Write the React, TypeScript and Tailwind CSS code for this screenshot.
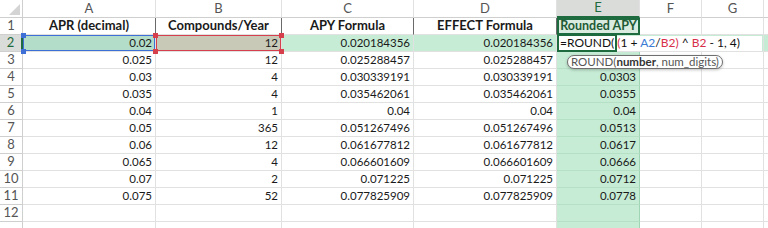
import React from 'react'

const letters = ['A', 'B', 'C', 'D', 'E', 'F', 'G', '']

const headers = ['APR (decimal)', 'Compounds/Year', 'APY Formula', 'EFFECT Formula', 'Rounded APY']

const data: string[][] = [
  ['0.02', '12', '0.020184356', '0.020184356', ''],
  ['0.025', '12', '0.025288457', '0.025288457', '0.0253'],
  ['0.03', '4', '0.030339191', '0.030339191', '0.0303'],
  ['0.035', '4', '0.035462061', '0.035462061', '0.0355'],
  ['0.04', '1', '0.04', '0.04', '0.04'],
  ['0.05', '365', '0.051267496', '0.051267496', '0.0513'],
  ['0.06', '12', '0.061677812', '0.061677812', '0.0617'],
  ['0.065', '4', '0.066601609', '0.066601609', '0.0666'],
  ['0.07', '2', '0.071225', '0.071225', '0.0712'],
  ['0.075', '52', '0.077825909', '0.077825909', '0.0778'],
  ['', '', '', '', ''],
  ['', '', '', '', ''],
]

const cell = 'border-r border-b border-[#e1e1e1] px-[3px] text-right leading-[16px] whitespace-nowrap'
const green = 'bg-[#c6ecd5]'
const rowHead = 'flex items-center justify-center border-r border-b border-[#cfcfcf] text-[13px] text-[#555]'

function Corner({ pos, color }: { pos: string; color: string }) {
  return <span className={`absolute w-[5px] h-[5px] z-20 ${pos} ${color}`} />
}

function EditCell() {
  return (
    <div className={`${cell} relative ${green} !px-0`}>
      <div className="absolute left-0 top-[1px] h-[15px] w-[205px] bg-white z-10" />
      <div className="absolute left-0 top-[-1px] h-[18px] z-20 flex items-stretch text-[12px] leading-[14px] text-[#111] whitespace-nowrap">
        <span className="border-2 border-[#1e6b40] pl-[1px] pr-[1px]">=ROUND(</span>
        <span className="pt-[2px]">
          <span className="text-[#d9304a]">(</span>1 + <span className="text-[#3a7bd5]">A2</span>/<span className="text-[#d9304a]">B2)</span> ^ <span className="text-[#d9304a]">B2</span> - 1, 4)
        </span>
      </div>
      <div className="absolute left-[10px] top-[20px] z-30 h-[14px] px-[3px] rounded-[7px] border border-[#6f6f6f] bg-white shadow-[0_1px_3px_rgba(0,0,0,0.25)] text-[11.5px] leading-[12px] text-[#555] text-left whitespace-nowrap">
        ROUND(<b className="text-[#333]">number</b>, num_digits)
      </div>
    </div>
  )
}

export default function App() {
  return (
    <div className="w-[768px] h-[228px] overflow-hidden bg-white text-[11.5px] text-[#1a1a1a]" style={{ fontFamily: 'Lato, "Open Sans", sans-serif' }}>
      <div className="grid grid-cols-[23px_133px_126px_132px_143px_83px_62px_62px_1fr] grid-rows-[18px_repeat(13,17px)]">
        {/* corner */}
        <div className="relative border-r border-b border-[#cfcfcf] bg-white">
          <span className="absolute right-[2px] bottom-[2px] w-0 h-0 border-l-[11px] border-l-transparent border-b-[11px] border-b-[#d4d4d4]" />
        </div>
        {letters.map((l, i) => (
          <div
            key={'h' + i}
            className={`flex items-center justify-center border-r border-[#e1e1e1] text-[13px] ${
              l === 'E' ? 'bg-[#dadcda] text-[#1e6b40] border-b-2 border-b-[#1e6b40]' : 'bg-white text-[#555] border-b border-b-[#cfcfcf]'
            }`}
          >
            {l}
          </div>
        ))}

        {/* row 1 */}
        <div className={rowHead}>1</div>
        {headers.map((h, i) =>
          i === 4 ? (
            <div key={h} className="flex items-center justify-center border-2 border-[#1e6b40] bg-[#d9ecdf] font-bold text-[12.5px] text-[#1e5a36] whitespace-nowrap">
              {h}
            </div>
          ) : (
            <div key={h} className="flex items-center justify-center border-r border-r-[#6a6a6a] border-b border-b-[#e1e1e1] font-bold text-[13px] whitespace-nowrap">
              {h}
            </div>
          )
        )}
        <div className={cell} />
        <div className={cell} />
        <div className={cell} />

        {data.map((r, ri) => {
          const n = ri + 2
          if (n === 2) {
            return (
              <React.Fragment key={n}>
                <div className="flex items-center justify-center border-r-2 border-r-[#1e6b40] border-b border-[#cfcfcf] bg-[#dadcda] text-[13px] text-[#1e6b40]">2</div>
                <div className={`${cell} relative bg-[#b4ddc9]`}>
                  <span className="absolute inset-0 border border-[#3d6fd6]" />
                  <Corner pos="left-[-2px] top-[-2px]" color="bg-[#3d6fd6]" />
                  <Corner pos="left-[-2px] bottom-[-3px]" color="bg-[#3d6fd6]" />
                  <span className="relative">{r[0]}</span>
                </div>
                <div className={`${cell} relative bg-[#c9c9b8]`}>
                  <span className="absolute inset-0 border border-[#d6404d]" />
                  <Corner pos="left-[-3px] top-[-2px]" color="bg-[#d6404d]" />
                  <Corner pos="left-[-3px] bottom-[-3px]" color="bg-[#d6404d]" />
                  <Corner pos="right-[-3px] top-[-2px]" color="bg-[#d6404d]" />
                  <Corner pos="right-[-3px] bottom-[-3px]" color="bg-[#d6404d]" />
                  <span className="relative">{r[1]}</span>
                </div>
                <div className={`${cell} ${green}`}>{r[2]}</div>
                <div className={`${cell} ${green}`}>{r[3]}</div>
                <EditCell />
                <div className={`${cell} ${green}`} />
                <div className={`${cell} ${green}`} />
                <div className={`${cell} ${green}`} />
              </React.Fragment>
            )
          }
          return (
            <React.Fragment key={n}>
              <div className={rowHead}>{n < 13 ? n : ''}</div>
              <div className={cell}>{r[0]}</div>
              <div className={cell}>{r[1]}</div>
              <div className={cell}>{r[2]}</div>
              <div className={cell}>{r[3]}</div>
              <div className={`${cell} ${green} border-r-[#9fd5b5] border-b-[#b5e0c6]`}>{r[4]}</div>
              <div className={cell} />
              <div className={cell} />
              <div className={cell} />
            </React.Fragment>
          )
        })}
      </div>
    </div>
  )
}
